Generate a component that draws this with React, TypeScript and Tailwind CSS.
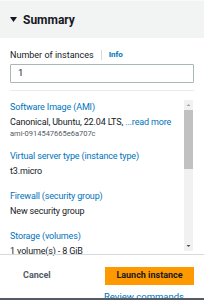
import React from "react";

const rows = [
  { title: "Software Image (AMI)", value: "Canonical, Ubuntu, 22.04 LTS, ", more: "...read more", sub: "ami-0914547665e6a707c" },
  { title: "Virtual server type (instance type)", value: "t3.micro" },
  { title: "Firewall (security group)", value: "New security group" },
  { title: "Storage (volumes)", value: "1 volume(s) - 8 GiB" },
];

export default function App() {
  return (
    <div className="h-[300px] w-[204px] flex flex-col bg-white overflow-hidden text-[#16191f]" style={{ fontFamily: 'Roboto, "Open Sans", sans-serif' }}>
      {/* Header */}
      <div className="h-[38px] shrink-0 bg-[#f2f3f3] border-t border-[#fafafa] flex items-center px-[10px] gap-[6px]">
        <svg width="7" height="5" viewBox="0 0 7 5"><path d="M0 0h7L3.5 5z" fill="#16191f" /></svg>
        <span className="text-[12px] font-bold">Summary</span>
      </div>

      {/* Number of instances */}
      <div className="px-[10px] pt-[10px] shrink-0">
        <div className="flex items-center text-[9px] leading-[14px]">
          <span>Number of instances</span>
          <span className="mx-[7px] h-[10px] w-px bg-[#d5dbdb]" />
          <span className="text-[#0073bb] font-bold text-[8px]">Info</span>
        </div>
        <div className="mt-[2px] h-[19px] border border-[#aab7b8] rounded-[1px] flex items-center px-[7px] text-[9.5px]">1</div>
        <div className="mt-[7px] h-px bg-[#eaeded]" />
      </div>

      {/* Scroll area */}
      <div className="flex-1 flex pl-[10px] pr-[11px] min-h-0">
        <div className="flex-1 min-w-0 flex flex-col gap-[10px] pt-[9px]">
          {rows.map((r) => (
            <div key={r.title} className="text-[9px] leading-[15px] tracking-[-0.15px]">
              <div className="text-[#0073bb]">{r.title}</div>
              <div className="whitespace-nowrap">
                {r.value}
                {r.more && <span className="text-[#0073bb]">{r.more}</span>}
              </div>
              {r.sub && <div className="text-[7.5px] leading-[11px] -mt-[2px] text-[#545b64] tracking-normal">{r.sub}</div>}
            </div>
          ))}
        </div>
        <div className="shrink-0 w-[9px] h-[151px] mt-[9px] bg-[#f1f1f1] flex flex-col items-center">
          <svg className="shrink-0" width="9" height="10" viewBox="0 0 9 10"><path d="M2.5 6h4L4.5 4z" fill="#a3a3a3" /></svg>
          <div className="shrink-0 w-[9px] h-[59px] bg-[#c1c1c1]" />
          <div className="flex-1" />
          <svg className="shrink-0" width="9" height="10" viewBox="0 0 9 10"><path d="M2.5 4h4L4.5 6z" fill="#505050" /></svg>
        </div>
      </div>

      {/* Footer */}
      <div className="h-px bg-[#d5dbdb] shrink-0" />
      <div className="h-[43px] shrink-0 flex flex-col">
        <div className="flex items-center justify-between pl-[23px] pr-[10px] pt-[12px]">
          <span className="text-[9px] font-bold text-[#545b64]">Cancel</span>
          <button className="w-[89px] h-[18px] bg-[#ff9900] text-[9px] font-bold text-[#16191f] flex items-center justify-center">
            Launch instance
          </button>
        </div>
        <div className="flex justify-end pr-[20px] mt-[7px] text-[9.5px] text-[#0073bb] leading-[10px]">Review commands</div>
      </div>
      <div className="h-[2px] bg-[#545b64] shrink-0" />
    </div>
  );
}
